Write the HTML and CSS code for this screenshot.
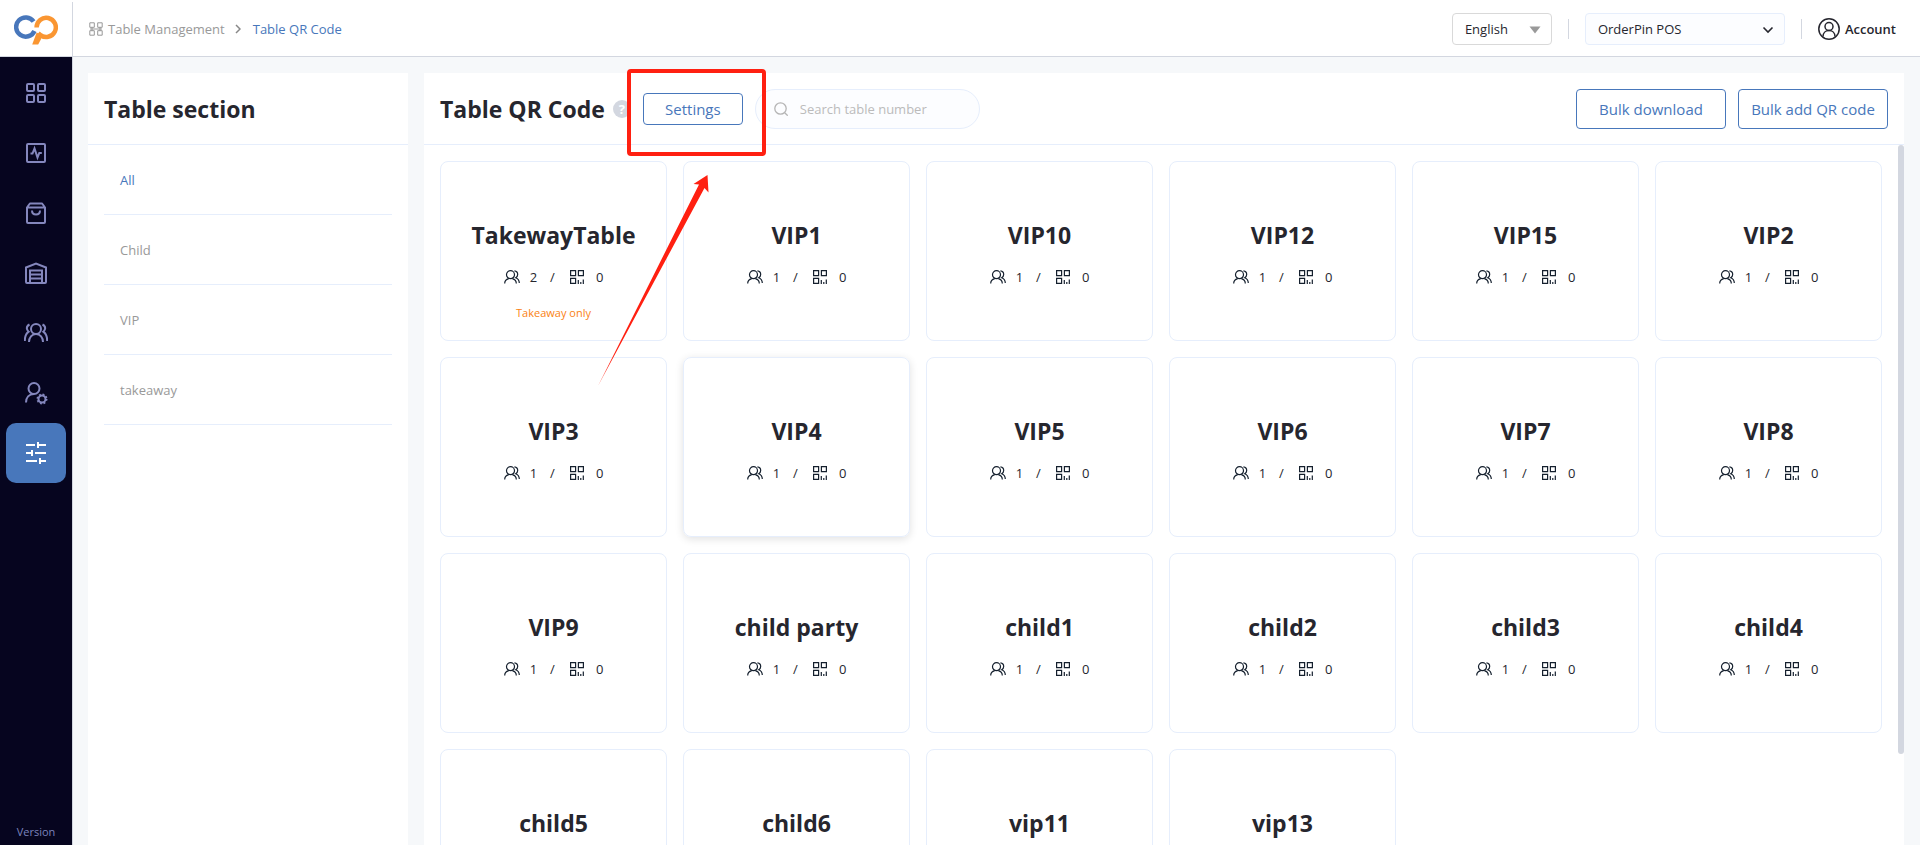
FILE: index.html
```html
<!DOCTYPE html>
<html lang="en">
<head>
  <meta charset="utf-8">
  <title>Table QR Code</title>
  <link rel="stylesheet" href="styles.css">
</head>
<body>
  <svg class="sprite" width="0" height="0" aria-hidden="true">
    <symbol id="people" viewBox="0 0 16 14">
      <circle cx="6.5" cy="4.7" r="4"/>
      <path d="M.7 13.5c0-2.2 1.6-4.2 4-4.9M8.4 8.6c2.3.7 3.9 2.7 3.9 4.9M10.4.9c1.9.3 3.3 1.8 3.3 3.6 0 1.5-.8 2.6-2 3.2 2.2.9 3.6 2.9 3.6 5.3"/>
    </symbol>
    <symbol id="qr" viewBox="0 0 14 14">
      <path d="M.6.6h5v5h-5zM8.4.6h5v5h-5zM.6 8.4h5v5h-5zM8.3 10v4M10.8 12v2M13.3 9.500v4.500"/>
    </symbol>
  </svg>

  <header class="topbar">
    <a class="logo" href="#" aria-label="OrderPin">
      <svg width="44" height="30" viewBox="0 0 44 30">
        <path d="M19.6 6.5A9.6 9.6 0 1 0 20.5 16" fill="none" stroke="#4877bb" stroke-width="4.5"/>
        <path d="M22.6 12.5A9.6 9.6 0 1 1 26 19.7L24.5 21.5" fill="none" stroke="#fa9632" stroke-width="4.5"/>
        <path d="M18.2 29.5l4.5-12 6 3.500-4.500 8.500z" fill="#fa9632"/>
      </svg>
    </a>
    <nav class="breadcrumb">
      <svg class="crumb-icon" width="14" height="14" viewBox="0 0 14 14">
        <path d="M.8.8h4.500v4.500H.8zM8.700.8h4.500v4.500H8.700zM.8 8.700h4.500v4.500H.8zM8.700 8.700h4.500v4.500H8.700zM3 5v4M11 5v4M1 7h12"/>
      </svg>
      <a href="#">Table Management</a>
      <svg class="chevron" width="6" height="10" viewBox="0 0 6 10"><path d="M1 1l4 4-4 4"/></svg>
      <a class="current" href="#">Table QR Code</a>
    </nav>
    <div class="tools">
      <div class="select language">
        <select aria-label="Language"><option>English</option></select>
        <svg width="12" height="8" viewBox="0 0 12 8"><path d="M.5.5h11L6 7.500z" fill="#999"/></svg>
      </div>
      <span class="divider"></span>
      <div class="select store">
        <select aria-label="Store"><option>OrderPin POS</option></select>
        <svg width="12" height="8" viewBox="0 0 12 8"><path d="M1.500 1.500L6 6l4.500-4.500" fill="none" stroke="#26262e" stroke-width="1.600"/></svg>
      </div>
      <span class="divider"></span>
      <a class="account" href="#">
        <svg width="22" height="22" viewBox="0 0 22 22">
          <circle cx="11" cy="11" r="10.200"/>
          <circle cx="11" cy="8.500" r="4"/>
          <path d="M5 18.500c0-3.500 2.500-6 6-6s6 2.500 6 6"/>
        </svg>
        Account
      </a>
    </div>
  </header>

  <div class="page">
    <nav class="sidebar">
      <a href="#" aria-label="Dashboard">
        <svg viewBox="0 0 24 24"><rect x="3" y="3" width="7" height="7" rx="1"/><rect x="14" y="3" width="7" height="7" rx="1"/><rect x="3" y="14" width="7" height="7" rx="1"/><rect x="14" y="14" width="7" height="7" rx="1"/></svg>
      </a>
      <a href="#" aria-label="Reports">
        <svg viewBox="0 0 24 24"><rect x="3" y="3" width="18" height="18" rx="1"/><path d="M6.500 12.500h2l2-5 3 9 1.800-4.500h2.500"/></svg>
      </a>
      <a href="#" aria-label="Orders">
        <svg viewBox="0 0 24 24"><path d="M3 6.500V21a1 1 0 0 0 1 1h16a1 1 0 0 0 1-1V6.500L18.500 3a1 1 0 0 0-1-.5h-11a1 1 0 0 0-1 .5zM3 6.500h18M8 9.500c0 2.500 1.500 4 4 4s4-1.500 4-4"/></svg>
      </a>
      <a href="#" aria-label="Inventory">
        <svg viewBox="0 0 24 24"><path d="M2 6.500L12 2.500l10 4V21a1 1 0 0 1-1 1H3a1 1 0 0 1-1-1zM6 22V9.500h12V22M6 13.500h12M6 17.500h12"/></svg>
      </a>
      <a href="#" aria-label="Customers">
        <svg viewBox="0 0 24 24"><circle cx="12" cy="8" r="5"/><path d="M5 21c0-4.500 2.800-8 7-8s7 3.500 7 8M5.500 3.500C3.500 4.500 2.500 6 3 8c.3 1.200.8 2 1.700 2.700C2 12.500.8 16 .8 20M18.500 3.500c2 1 3 2.500 2.500 4.500-.3 1.200-.8 2-1.700 2.700 2.700 1.800 3.900 5.300 3.900 9.300"/></svg>
      </a>
      <a href="#" aria-label="Staff">
        <svg viewBox="0 0 24 24"><circle cx="10" cy="7.500" r="5.500"/><path d="M2 21.500C2 16.500 5 13 10 13"/><circle cx="18" cy="18" r="3.500"/><circle cx="18" cy="18" r="4.500" stroke-dasharray="1.800 1.734"/></svg>
      </a>
      <a class="active" href="#" aria-label="Table management">
        <svg viewBox="0 0 24 24"><path d="M2 4h9M14 1v6M14 4h8M2 12h6M8 9v6M11 12h11M2 20h11M16 17v6M16 20h6"/></svg>
      </a>
      <span class="version">Version</span>
    </nav>

    <main class="content">
      <section class="panel sections">
        <div class="panel-head">
          <h2>Table section</h2>
        </div>
        <ul class="section-list">
          <li><a class="selected" href="#">All</a></li>
          <li><a href="#">Child</a></li>
          <li><a href="#">VIP</a></li>
          <li><a href="#">takeaway</a></li>
        </ul>
      </section>

      <section class="panel tables">
        <div class="panel-head">
          <h2>Table QR Code</h2>
          <span class="help">?</span>
          <div class="settings-wrap">
            <button class="btn btn-small" type="button">Settings</button>
            <div class="highlight"></div>
            <svg class="arrow" width="112" height="212" viewBox="0 0 112 212">
              <path d="M.5 211L101 10.500 95.500 10 109.500 1l1 17.500-4-4.500z"/>
            </svg>
          </div>
          <label class="search">
            <svg width="14" height="14" viewBox="0 0 14 14"><circle cx="6.500" cy="6.500" r="5.700"/><path d="M10.700 10.700l3 3"/></svg>
            <input type="text" placeholder="Search table number" aria-label="Search table number">
          </label>
          <div class="bulk">
            <button class="btn" type="button">Bulk download</button>
            <button class="btn" type="button">Bulk add QR code</button>
          </div>
        </div>
        <div class="scroll-area">
          <div class="scroll">
            <div class="grid" id="grid"></div>
          </div>
          <div class="scroll-thumb"></div>
        </div>
      </section>
    </main>
  </div>

  <script src="script.js"></script>
</body>
</html>
```
FILE: styles.css
```css
* {
  box-sizing: border-box;
}

body {
  margin: 0;
  height: 100vh;
  display: flex;
  flex-direction: column;
  overflow: hidden;
  font-family: "Open Sans", "Noto Sans", sans-serif;
  font-size: 13px;
  line-height: 20px;
  color: #26262e;
  background-color: #f6f8fa;
}

a {
  color: inherit;
  text-decoration: none;
}

svg {
  flex: none;
}

.sprite {
  position: absolute;
}

/* top bar */
.topbar {
  flex: none;
  height: 57px;
  display: flex;
  align-items: center;
  padding-top: 2px;
  background-color: #fff;
  border-bottom: 1px solid #d3d7e0;
}

.logo {
  width: 73px;
  align-self: stretch;
  display: flex;
  align-items: center;
  justify-content: center;
  padding-top: 2px;
  border-right: 1px solid #d3d7e0;
}

.breadcrumb {
  display: flex;
  align-items: center;
  padding-left: 16px;
  color: #999;
}

.crumb-icon {
  margin-right: 5px;
  fill: none;
  stroke: #999;
}

.chevron {
  margin: 0 12px 0 10px;
  fill: none;
  stroke: #888;
  stroke-width: 1.5;
}

.breadcrumb .current {
  color: #4877bb;
}

.tools {
  display: flex;
  align-items: center;
  gap: 16px;
  margin-left: auto;
  padding-right: 24px;
}

.divider {
  width: 1px;
  height: 20px;
  background-color: #d3d7e0;
}

.select {
  position: relative;
}

.select select {
  appearance: none;
  width: 100%;
  height: 32px;
  padding: 0 12px;
  border: 1px solid #d9d9d9;
  border-radius: 4px;
  background-color: #fff;
  font: inherit;
  color: inherit;
}

.select svg {
  position: absolute;
  right: 11px;
  top: 13px;
  pointer-events: none;
}

.language {
  width: 100px;
}

.store {
  width: 200px;
}

.store select {
  border-color: #e6eefc;
  background-color: #fcfdff;
}

.account {
  display: flex;
  align-items: center;
  gap: 5px;
  font-weight: 600;
}

.account svg {
  fill: none;
  stroke: #26262e;
  stroke-width: 1.5;
}

/* sidebar */
.page {
  flex: 1;
  min-height: 0;
  display: flex;
}

.sidebar {
  width: 73px;
  display: flex;
  flex-direction: column;
  padding: 6px;
  background-color: #06051f;
  border-right: 1px solid #d3d7e0;
}

.sidebar a {
  height: 60px;
  display: flex;
  align-items: center;
  justify-content: center;
  border-radius: 10px;
}

.sidebar svg {
  width: 24px;
  height: 24px;
  fill: none;
  stroke: #8487bd;
  stroke-width: 2;
}

.sidebar .active {
  background-color: #4877bb;
}

.sidebar .active svg {
  stroke: #fff;
}

.version {
  margin-top: auto;
  font-size: 11px;
  line-height: 14px;
  text-align: center;
  color: #7b83bd;
}

/* panels */
.content {
  flex: 1;
  min-width: 0;
  display: flex;
  gap: 16px;
  padding: 16px 16px 0 15px;
}

.panel {
  display: flex;
  flex-direction: column;
  background-color: #fff;
}

.panel-head {
  flex: none;
  height: 72px;
  display: flex;
  align-items: center;
  padding: 0 16px;
  border-bottom: 1px solid #e6eefc;
}

.panel-head h2 {
  margin: 0;
  font-size: 23px;
  line-height: 32px;
  font-weight: 700;
}

.sections {
  flex: none;
  width: 320px;
}

.section-list {
  margin: 0;
  padding: 0 16px;
  list-style: none;
}

.section-list a {
  display: block;
  padding: 25px 16px 24px;
  border-bottom: 1px solid #e6eefc;
  color: #999;
}

.section-list .selected {
  color: #4877bb;
}

.tables {
  flex: 1;
  min-width: 0;
}

.help {
  width: 18px;
  height: 18px;
  margin-left: 8px;
  border-radius: 50%;
  background-color: #d3d7e0;
  color: #fff;
  font-size: 13px;
  line-height: 18px;
  font-weight: 700;
  text-align: center;
}

.btn {
  width: 150px;
  height: 40px;
  padding: 0;
  border: 1px solid #4877bb;
  border-radius: 4px;
  background-color: #fff;
  color: #4877bb;
  font: inherit;
  font-size: 15px;
  cursor: pointer;
}

.btn-small {
  width: 100px;
  height: 32px;
}

.settings-wrap {
  position: relative;
  margin: 0 12px;
}

.highlight {
  position: absolute;
  z-index: 2;
  left: -16px;
  top: -24px;
  width: 139px;
  height: 87px;
  border: 4px solid #ff2011;
  border-radius: 4px;
  pointer-events: none;
}

.arrow {
  position: absolute;
  z-index: 2;
  left: -45px;
  top: 81px;
  fill: #ff2011;
  pointer-events: none;
}

.search {
  width: 225px;
  height: 40px;
  display: flex;
  align-items: center;
  gap: 12px;
  padding: 0 18px;
  border: 1px solid #e6eefc;
  border-radius: 20px;
  background-color: #fcfdff;
}

.search svg {
  fill: none;
  stroke: #b5b5b5;
  stroke-width: 1.3;
}

.search input {
  flex: 1;
  min-width: 0;
  padding: 0;
  border: 0;
  outline: 0;
  background: none;
  font: inherit;
}

.search input::placeholder {
  color: #bbb;
}

.bulk {
  display: flex;
  gap: 12px;
  margin-left: auto;
}

/* table cards */
.scroll-area {
  flex: 1;
  min-height: 0;
  position: relative;
}

.scroll {
  height: 100%;
  overflow-y: auto;
  scrollbar-width: none;
}

.scroll-thumb {
  position: absolute;
  top: 0;
  right: 0;
  width: 6px;
  height: 87%;
  border-radius: 3px;
  background-color: #d3d7e0;
}

.grid {
  display: grid;
  grid-template-columns: repeat(6, 1fr);
  gap: 16px;
  padding: 16px 22px 24px 16px;
}

.card {
  height: 180px;
  padding-top: 57px;
  border: 1px solid #e6eefc;
  border-radius: 8px;
  text-align: center;
}

.card.hover {
  box-shadow: 0 2px 8px rgba(0, 0, 0, 0.12);
}

.card h3 {
  margin: 0;
  font-size: 23px;
  line-height: 32px;
  font-weight: 700;
}

.counts {
  display: flex;
  align-items: center;
  justify-content: center;
  margin-top: 16px;
}

.counts svg {
  fill: none;
  stroke: #15202e;
  stroke-width: 1.2;
}

.counts span {
  margin-left: 10px;
}

.counts .slash {
  margin: 0 15px 0 13px;
}

.counts .codes {
  margin-left: 12px;
}

.note {
  margin: 18px 0 0;
  font-size: 11px;
  line-height: 16px;
  color: #fa8214;
}
```
FILE: script.js
```js
const tables = [
  { name: 'TakewayTable', seats: 2, note: 'Takeaway only' },
  { name: 'VIP1' }, { name: 'VIP10' }, { name: 'VIP12' }, { name: 'VIP15' }, { name: 'VIP2' },
  { name: 'VIP3' }, { name: 'VIP4', hover: true }, { name: 'VIP5' }, { name: 'VIP6' }, { name: 'VIP7' }, { name: 'VIP8' },
  { name: 'VIP9' }, { name: 'child party' }, { name: 'child1' }, { name: 'child2' }, { name: 'child3' }, { name: 'child4' },
  { name: 'child5' }, { name: 'child6' }, { name: 'vip11' }, { name: 'vip13' }
];

document.getElementById('grid').innerHTML = tables.map(table => `
  <article class="card${table.hover ? ' hover' : ''}">
    <h3>${table.name}</h3>
    <div class="counts">
      <svg width="16" height="14"><use href="#people"/></svg>
      <span>${table.seats || 1}</span>
      <span class="slash">/</span>
      <svg width="14" height="14"><use href="#qr"/></svg>
      <span class="codes">0</span>
    </div>
    ${table.note ? `<p class="note">${table.note}</p>` : ''}
  </article>
`).join('');
```
